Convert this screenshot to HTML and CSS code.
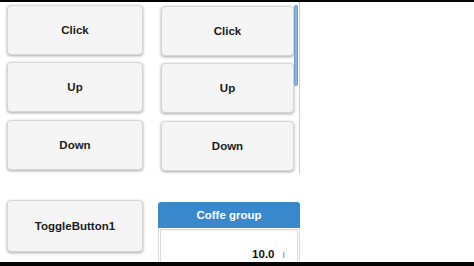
FILE: index.html
```html
<!DOCTYPE html>
<html>
<head>
<meta charset="utf-8">
<link rel="stylesheet" href="styles.css">
</head>
<body>
<div class="frame">
  <div class="bar bar-top"></div>
  <div class="stage">
    <div class="col col-left">
      <button class="btn">Click</button>
      <button class="btn">Up</button>
      <button class="btn btn-down">Down</button>
      <button class="btn btn-toggle">ToggleButton1</button>
    </div>
    <div class="col col-right">
      <div class="scroller">
        <div class="scroll-list">
          <button class="btn btn-narrow">Click</button>
          <button class="btn btn-narrow">Up</button>
          <button class="btn btn-narrow btn-down">Down</button>
        </div>
        <div class="thumb"></div>
      </div>
      <div class="group">
        <div class="group-head">Coffe group</div>
        <div class="group-body">
          <div class="field">
            <span class="value">10.0</span><span class="caret">I</span>
          </div>
        </div>
      </div>
    </div>
  </div>
  <div class="bar bar-bottom"></div>
</div>
</body>
</html>
```

FILE: styles.css
```css
html, body {
  margin: 0;
  padding: 0;
  background: #ffffff;
}

.frame {
  width: 474px;
  height: 266px;
  display: flex;
  flex-direction: column;
  overflow: hidden;
  font-family: "Liberation Sans", Arial, sans-serif;
}

.bar {
  background: #050505;
  flex: none;
}
.bar-top { height: 2px; }
.bar-bottom { height: 4px; }

.stage {
  flex: 1;
  display: flex;
  overflow: hidden;
  background: #ffffff;
}

.col {
  display: flex;
  flex-direction: column;
}

.col-left {
  padding: 3px 0 0 7px;
  width: 136px;
}

.btn {
  box-sizing: border-box;
  width: 136px;
  height: 50px;
  margin: 0 0 7px 0;
  padding: 0;
  background: #f5f5f5;
  border: 1px solid #d6d6d6;
  border-radius: 4px;
  box-shadow: 0 1px 3px rgba(0, 0, 0, 0.35);
  font-family: "Liberation Sans", Arial, sans-serif;
  font-weight: bold;
  font-size: 11.5px;
  color: #1c1c1c;
  text-align: center;
}

.btn-down { margin-top: 1px; }

.btn-toggle {
  margin-top: 23px;
  height: 52px;
}

.col-right {
  margin-left: 15px;
  width: 142px;
}

.scroller {
  position: relative;
  box-sizing: border-box;
  height: 172px;
  border-right: 1px solid #cfcfcf;
  padding: 4px 0 0 3px;
}

.btn-narrow {
  width: 133px;
}

.thumb {
  position: absolute;
  right: 1px;
  top: 3px;
  width: 4px;
  height: 81px;
  border-radius: 2px;
  background: #8fb3dd;
  border: 1px solid #6f97c8;
  box-sizing: border-box;
}

.group {
  margin-top: 28px;
  width: 142px;
  display: flex;
  flex-direction: column;
}

.group-head {
  height: 26px;
  background: #3a88cc;
  border-radius: 3px 3px 0 0;
  color: #ffffff;
  font-weight: bold;
  font-size: 11.5px;
  display: flex;
  align-items: center;
  justify-content: center;
}

.group-body {
  box-sizing: border-box;
  height: 40px;
  border: 1px solid #d9d9d9;
  border-top: none;
  padding: 1px;
  background: #ffffff;
}

.field {
  box-sizing: border-box;
  height: 100%;
  border: 1px solid #dcdcdc;
  box-shadow: inset 0 1px 1px rgba(0, 0, 0, 0.06);
  display: flex;
  justify-content: flex-end;
  align-items: flex-start;
  padding: 18px 12px 0 0;
  font-size: 11.5px;
  font-weight: bold;
  color: #111111;
}

.caret {
  margin-left: 8px;
  font-weight: normal;
  font-size: 9px;
  color: #777777;
  padding-top: 2px;
}
```
